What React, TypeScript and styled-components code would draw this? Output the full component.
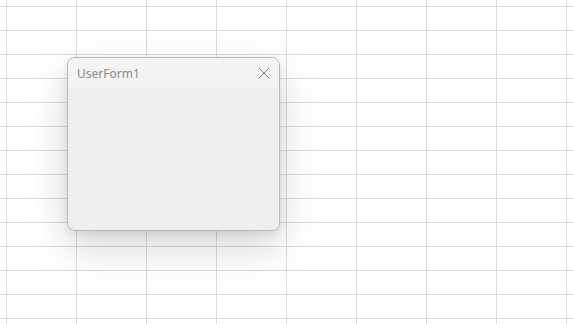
import React from "react";
import styled, { createGlobalStyle } from "styled-components";

const Global = createGlobalStyle`
  html, body { margin: 0; padding: 0; background: #ffffff; overflow: hidden; }
  body { font-family: "Noto Sans", "Open Sans", sans-serif; }
`;

const Page = styled.div`
  position: relative;
  width: 574px;
  height: 324px;
  overflow: hidden;
  background: #ffffff;
`;

const Sheet = styled.div`
  display: grid;
  grid-template-columns: 7px repeat(9, 70px);
  grid-template-rows: 7px repeat(14, 24px);
`;

const Cell = styled.div`
  box-sizing: border-box;
  border-right: 1px solid #dcdcdc;
  border-bottom: 1px solid #dcdcdc;
`;

const Dialog = styled.div`
  position: absolute;
  left: 67px;
  top: 57px;
  width: 213px;
  height: 174px;
  box-sizing: border-box;
  border: 1px solid #b8b8b8;
  border-radius: 8px;
  background: #eeeeee;
  box-shadow: 0 16px 40px rgba(0, 0, 0, 0.17), 0 3px 8px rgba(0, 0, 0, 0.08);
  display: flex;
  flex-direction: column;
  overflow: hidden;
`;

const TitleBar = styled.div`
  height: 30px;
  background: #f3f3f3;
  display: flex;
  align-items: center;
  justify-content: space-between;
  padding: 0 9px 0 9px;
`;

const Title = styled.span`
  font-size: 12px;
  color: #8a8a8a;
  letter-spacing: 0;
`;

const Close = styled.div`
  width: 12px;
  height: 12px;
  display: flex;
  align-items: center;
  justify-content: center;
`;

const Body = styled.div`
  flex: 1;
  background: #eeeeee;
`;

export default function App() {
  const cells = Array.from({ length: 10 * 15 });
  return (
    <Page>
      <Global />
      <Sheet>
        {cells.map((_, i) => (
          <Cell key={i} />
        ))}
      </Sheet>
      <Dialog>
        <TitleBar>
          <Title>UserForm1</Title>
          <Close>
            <svg width="12" height="12" viewBox="0 0 12 12">
              <path d="M1 1 L11 11 M11 1 L1 11" stroke="#7a7a7a" strokeWidth="1" fill="none" />
            </svg>
          </Close>
        </TitleBar>
        <Body />
      </Dialog>
    </Page>
  );
}
